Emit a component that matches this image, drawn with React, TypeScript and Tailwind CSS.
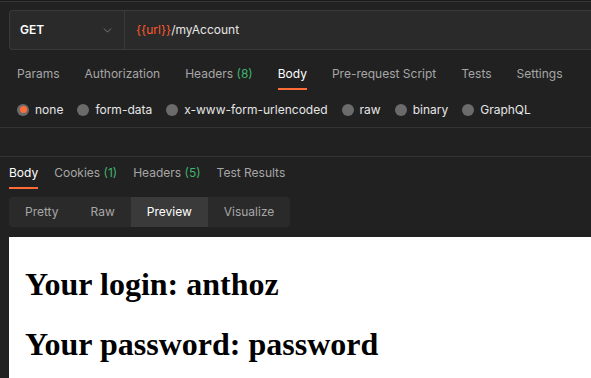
import { ChevronDown } from "lucide-react";

const requestTabs = [
  { label: "Params" },
  { label: "Authorization" },
  { label: "Headers", count: "(8)" },
  { label: "Body", active: true },
  { label: "Pre-request Script" },
  { label: "Tests" },
  { label: "Settings" },
];

const bodyTypes = ["none", "form-data", "x-www-form-urlencoded", "raw", "binary", "GraphQL"];

const responseTabs = [
  { label: "Body", active: true },
  { label: "Cookies", count: "(1)" },
  { label: "Headers", count: "(5)" },
  { label: "Test Results" },
];

const views = ["Pretty", "Raw", "Preview", "Visualize"];

const App = () => {
  return (
    <div
      className="w-[591px] h-[378px] overflow-hidden whitespace-nowrap bg-[#212121] text-[12px] text-[#a6a6a6] flex flex-col"
      style={{ fontFamily: "Inter, 'Noto Sans', sans-serif" }}
    >
      <div className="h-[1px] shrink-0 bg-[#1a1a1a]" />
      <div className="h-[1px] shrink-0 bg-[#363636]" />

      {/* url bar */}
      <div className="pl-[9px] pt-[8px]">
        <div className="flex h-[40px] items-stretch rounded-l-[4px] border border-r-0 border-[#3a3a3a] bg-[#2a2a2a]">
          <div className="flex w-[115px] shrink-0 items-center justify-between border-r border-[#3a3a3a] pl-[10px] pr-[10px]">
            <span className="font-semibold text-white">GET</span>
            <ChevronDown size={13} strokeWidth={1.5} className="text-[#8a8a8a]" />
          </div>
          <div className="flex items-center pl-[11px]">
            <span className="text-[#ff5a2a]">{"{{url}}"}</span>
            <span className="text-[#e6e6e6]">/myAccount</span>
          </div>
        </div>
      </div>

      {/* request tabs */}
      <div className="flex gap-[25px] pl-[17px] pt-[16px]">
        {requestTabs.map((t) => (
          <div key={t.label} className="flex shrink-0 flex-col">
            <div className={`leading-[15px] ${t.active ? "text-white" : ""}`}>
              {t.label}
              {t.count && <span className="text-[#3fb56e]"> {t.count}</span>}
            </div>
            <div className={`mt-[7px] h-[2px] ${t.active ? "bg-[#ff6c37]" : ""}`} />
          </div>
        ))}
      </div>

      {/* body types */}
      <div className="flex items-center pl-[17px] pt-[12px]">
        {bodyTypes.map((b, i) => (
          <div key={b} className="mr-[14px] flex shrink-0 items-center gap-[6px]">
            {i === 0 ? (
              <span className="flex h-[12px] w-[12px] items-center justify-center rounded-full bg-[#6b6b6b]">
                <span className="h-[7px] w-[7px] rounded-full bg-[#ff6c37]" />
              </span>
            ) : (
              <span className="h-[12px] w-[12px] rounded-full bg-[#6b6b6b]" />
            )}
            <span className="leading-[15px] text-[#e6e6e6]">{b}</span>
          </div>
        ))}
      </div>

      <div className="mt-[10px] h-[1px] shrink-0 bg-[#333333]" />
      <div className="h-[28px] shrink-0" />
      <div className="h-[1px] shrink-0 bg-[#333333]" />

      {/* response tabs */}
      <div className="flex gap-[16px] pl-[9px] pt-[8px]">
        {responseTabs.map((t) => (
          <div key={t.label + (t.count ?? "")} className="flex shrink-0 flex-col">
            <div className={`leading-[15px] ${t.active ? "text-white" : ""}`}>
              {t.label}
              {t.count && <span className="text-[#3fb56e]"> {t.count}</span>}
            </div>
            <div className={`mt-[7px] h-[2px] ${t.active ? "bg-[#ff6c37]" : ""}`} />
          </div>
        ))}
      </div>

      {/* view switch */}
      <div className="pl-[9px] pt-[8px]">
        <div className="flex h-[30px] w-fit overflow-hidden rounded-[4px] bg-[#2a2a2a]">
          {views.map((v) => (
            <div
              key={v}
              className={`flex items-center px-[16px] ${
                v === "Preview" ? "bg-[#3a3a3a] text-white" : ""
              }`}
            >
              {v}
            </div>
          ))}
        </div>
      </div>

      {/* preview */}
      <div
        className="ml-[9px] mt-[10px] flex-1 bg-white pl-[16px] pt-[29px] text-black"
        style={{ fontFamily: "'Liberation Serif', 'Times New Roman', serif" }}
      >
        <h1 className="text-[32px] font-bold leading-[37px]">Your login: anthoz</h1>
        <h1 className="mt-[23px] text-[32px] font-bold leading-[37px]">Your password: password</h1>
      </div>
    </div>
  );
};

export default App;
